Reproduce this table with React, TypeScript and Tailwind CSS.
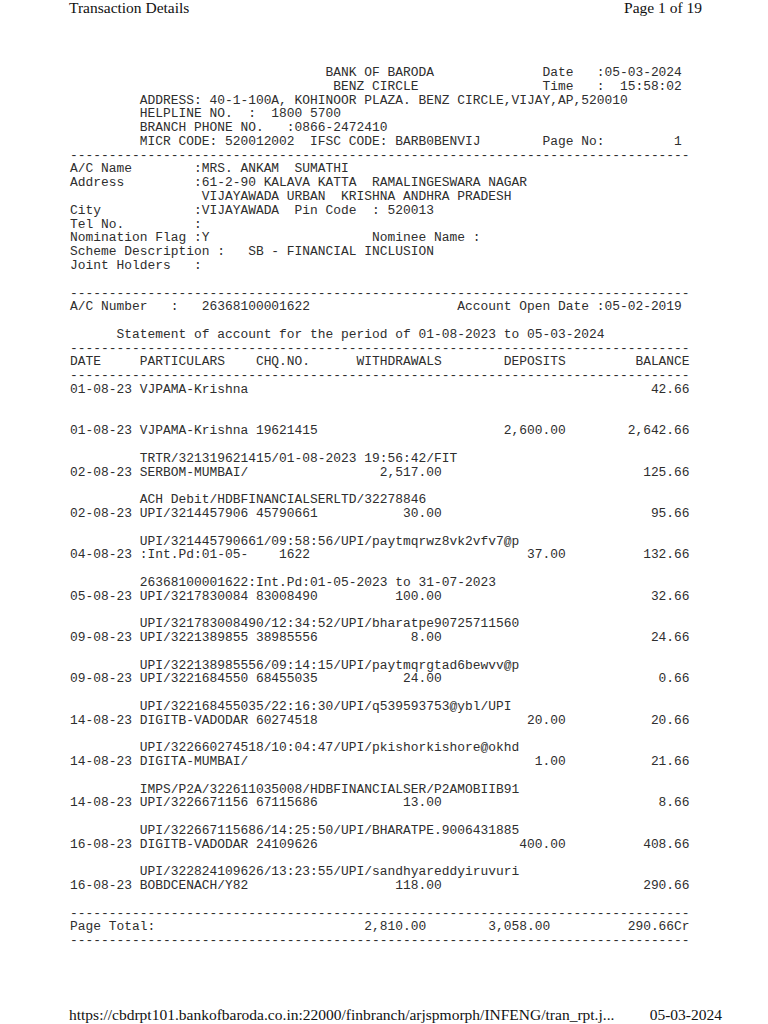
import React from "react";

const W = 80;
const dash = "-".repeat(W);

function padTo(s: string, col: number) {
  return s.length >= col ? s + " " : s + " ".repeat(col - s.length);
}
function rightAt(s: string, text: string, endExcl: number) {
  return padTo(s, endExcl - text.length) + text;
}
function txn(date: string, part: string, wd: string, dep: string, bal: string) {
  let s = date + " " + part;
  if (wd) s = rightAt(s, wd, 48);
  if (dep) s = rightAt(s, dep, 64);
  s = rightAt(s, bal, 80);
  return s;
}
const cont = (t: string) => " ".repeat(9) + t;

const lines: string[] = [
  padTo(padTo(" ".repeat(33) + "BANK OF BARODA", 61) + "Date", 68) + ":05-03-2024",
  padTo(padTo(" ".repeat(34) + "BENZ CIRCLE", 61) + "Time", 68) + ":  15:58:02",
  " ".repeat(9) + "ADDRESS: 40-1-100A, KOHINOOR PLAZA. BENZ CIRCLE,VIJAY,AP,520010",
  " ".repeat(9) + "HELPLINE NO.  :  1800 5700",
  " ".repeat(9) + "BRANCH PHONE NO.   :0866-2472410",
  rightAt(padTo(" ".repeat(9) + "MICR CODE: 520012002  IFSC CODE: BARB0BENVIJ", 61) + "Page No:", "1", 79),
  dash,
  "A/C Name        :MRS. ANKAM  SUMATHI",
  "Address         :61-2-90 KALAVA KATTA  RAMALINGESWARA NAGAR",
  " ".repeat(17) + "VIJAYAWADA URBAN  KRISHNA ANDHRA PRADESH",
  "City            :VIJAYAWADA  Pin Code  : 520013",
  "Tel No.         :",
  padTo("Nomination Flag :Y", 39) + "Nominee Name :",
  "Scheme Description :   SB - FINANCIAL INCLUSION",
  "Joint Holders   :",
  "",
  dash,
  padTo("A/C Number   :   26368100001622", 50) + "Account Open Date :05-02-2019",
  "",
  " ".repeat(6) + "Statement of account for the period of 01-08-2023 to 05-03-2024",
  dash,
  padTo(padTo(padTo(padTo(padTo("DATE", 9) + "PARTICULARS", 24) + "CHQ.NO.", 37) + "WITHDRAWALS", 56) + "DEPOSITS", 73) + "BALANCE",
  dash,
  txn("01-08-23", "VJPAMA-Krishna", "", "", "42.66"),
  "",
  "",
  txn("01-08-23", "VJPAMA-Krishna 19621415", "", "2,600.00", "2,642.66"),
  "",
  cont("TRTR/321319621415/01-08-2023 19:56:42/FIT"),
  txn("02-08-23", "SERBOM-MUMBAI/", "2,517.00", "", "125.66"),
  "",
  cont("ACH Debit/HDBFINANCIALSERLTD/32278846"),
  txn("02-08-23", "UPI/3214457906 45790661", "30.00", "", "95.66"),
  "",
  cont("UPI/321445790661/09:58:56/UPI/paytmqrwz8vk2vfv7@p"),
  txn("04-08-23", ":Int.Pd:01-05-    1622", "", "37.00", "132.66"),
  "",
  cont("26368100001622:Int.Pd:01-05-2023 to 31-07-2023"),
  txn("05-08-23", "UPI/3217830084 83008490", "100.00", "", "32.66"),
  "",
  cont("UPI/321783008490/12:34:52/UPI/bharatpe90725711560"),
  txn("09-08-23", "UPI/3221389855 38985556", "8.00", "", "24.66"),
  "",
  cont("UPI/322138985556/09:14:15/UPI/paytmqrgtad6bewvv@p"),
  txn("09-08-23", "UPI/3221684550 68455035", "24.00", "", "0.66"),
  "",
  cont("UPI/322168455035/22:16:30/UPI/q539593753@ybl/UPI"),
  txn("14-08-23", "DIGITB-VADODAR 60274518", "", "20.00", "20.66"),
  "",
  cont("UPI/322660274518/10:04:47/UPI/pkishorkishore@okhd"),
  txn("14-08-23", "DIGITA-MUMBAI/", "", "1.00", "21.66"),
  "",
  cont("IMPS/P2A/322611035008/HDBFINANCIALSER/P2AMOBIIB91"),
  txn("14-08-23", "UPI/3226671156 67115686", "13.00", "", "8.66"),
  "",
  cont("UPI/322667115686/14:25:50/UPI/BHARATPE.9006431885"),
  txn("16-08-23", "DIGITB-VADODAR 24109626", "", "400.00", "408.66"),
  "",
  cont("UPI/322824109626/13:23:55/UPI/sandhyareddyiruvuri"),
  txn("16-08-23", "BOBDCENACH/Y82", "118.00", "", "290.66"),
  "",
  dash,
  rightAt(rightAt(rightAt("Page Total:", "2,810.00", 46), "3,058.00", 62), "290.66Cr", 80),
  dash,
];

export default function App() {
  return (
    <div className="w-[768px] h-[1024px] bg-white flex flex-col overflow-hidden">
      <div className="flex justify-between pl-[69px] pr-[66px] font-['Liberation_Serif','Times_New_Roman',serif] text-[15.5px] leading-[16px] text-[#111]">
        <span>Transaction Details</span>
        <span>Page 1 of 19</span>
      </div>
      <pre className="mt-[50px] ml-[70px] font-['Liberation_Mono','Courier_New',monospace] text-[12.92px] leading-[13.78px] text-[#2e2e2e] whitespace-pre">
        {lines.join("\n")}
      </pre>
      <div className="mt-auto flex justify-between pl-[69px] pr-[46px] pb-[1px] font-['Liberation_Serif','Times_New_Roman',serif] text-[15.5px] leading-[16px] text-[#111]">
        <span>https://cbdrpt101.bankofbaroda.co.in:22000/finbranch/arjspmorph/INFENG/tran_rpt.j...</span>
        <span>05-03-2024</span>
      </div>
    </div>
  );
}
